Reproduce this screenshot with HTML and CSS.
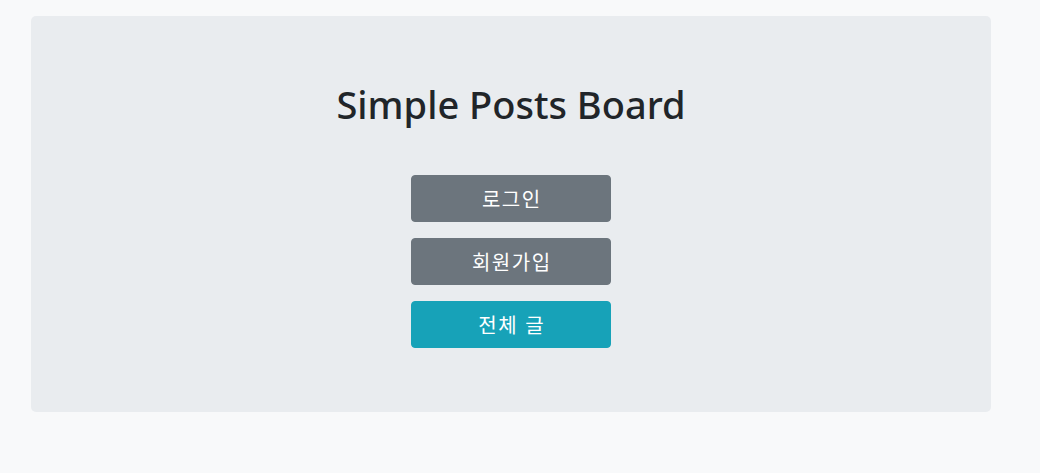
FILE: index.html
```html
<!DOCTYPE html>
<html lang="ko">
<head>
<meta charset="utf-8">
<title>Simple Posts Board</title>
<link rel="stylesheet" href="styles.css">
</head>
<body>
<div class="container">
  <div class="jumbotron">
    <h1 class="title">Simple Posts Board</h1>
    <div class="actions">
      <a class="btn btn-secondary" href="#">로그인</a>
      <a class="btn btn-secondary" href="#">회원가입</a>
      <a class="btn btn-info" href="#">전체 글</a>
    </div>
  </div>
</div>
</body>
</html>
```

FILE: styles.css
```css
html, body {
  margin: 0;
  padding: 0;
}
body {
  background: #f8f9fa;
  font-family: "Noto Sans", "Noto Sans CJK KR", sans-serif;
  color: #212529;
}
.container {
  width: 960px;
  margin: 0 auto 0 31px;
  padding-top: 16px;
}
.jumbotron {
  background: #e9ecef;
  border-radius: 5px;
  padding: 64px 32px;
  display: flex;
  flex-direction: column;
  align-items: center;
}
.title {
  margin: 0 0 47px;
  font-size: 38px;
  line-height: 48px;
  font-weight: 500;
  text-align: center;
}
.actions {
  display: flex;
  flex-direction: column;
  gap: 16px;
  align-items: center;
}
.btn {
  box-sizing: border-box;
  display: block;
  width: 200px;
  height: 47px;
  line-height: 45px;
  border: 1px solid transparent;
  border-radius: 4px;
  color: #fff;
  text-decoration: none;
  text-align: center;
  font-size: 20px;
  letter-spacing: 1.5px;
  text-indent: 1.5px;
  font-family: "Noto Sans CJK KR", sans-serif;
}
.btn-secondary {
  background: #6c757d;
  border-color: #6c757d;
}
.btn-info {
  background: #17a2b8;
  border-color: #17a2b8;
}
```
